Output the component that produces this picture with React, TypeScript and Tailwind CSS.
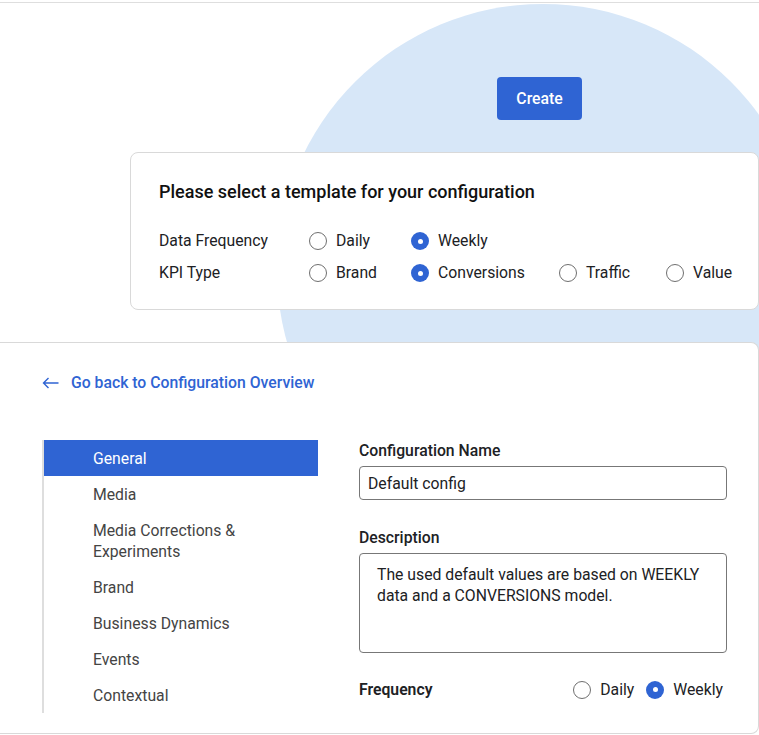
import { useState } from "react";

const blue = "bg-[#2f64d3]";

function Radio({ checked, label, onClick }: { checked: boolean; label: string; onClick?: () => void }) {
  return (
    <button type="button" onClick={onClick} className="flex items-center gap-[9px] text-left">
      {checked ? (
        <span className={`flex h-[18px] w-[18px] items-center justify-center rounded-full ${blue}`}>
          <span className="h-[5px] w-[5px] rounded-full bg-white" />
        </span>
      ) : (
        <span className="h-[18px] w-[18px] rounded-full border-[1.5px] border-[#6f6f6f] bg-white" />
      )}
      <span className="text-[15.75px] leading-[20px] text-[#202124]">{label}</span>
    </button>
  );
}

const sections = [
  "General",
  "Media",
  "Media Corrections & Experiments",
  "Brand",
  "Business Dynamics",
  "Events",
  "Contextual",
];

export default function App() {
  const [freq, setFreq] = useState("WEEKLY");
  const [kpi, setKpi] = useState("CONVERSIONS");
  const [active, setActive] = useState("General");
  const [name, setName] = useState("Default config");

  return (
    <div className="relative h-[735px] w-[759px] overflow-hidden bg-white font-['Roboto',sans-serif] text-[#202124]">
      {/* decorative blob behind the cards */}
      <div className="absolute left-[277px] top-[4px] h-[532px] w-[532px] rounded-full bg-[#d7e7f8]" />

      <div className="relative">
        <div className="mt-[2px] border-t border-[#dedede]" />

        <div className="pl-[497px] pt-[74px]">
          <button className={`h-[43px] w-[85px] rounded-[4px] ${blue} text-[15.75px] font-medium text-white`}>
            Create
          </button>
        </div>

        {/* template picker */}
        <div className="ml-[130px] mt-[32px] h-[158px] w-[629px] rounded-lg border border-[#d9d9d9] bg-white pl-7 pt-[28px]">
          <h2 className="text-[18px] font-medium leading-[22px] text-[#111]">
            Please select a template for your configuration
          </h2>
          <div className="mt-[22px] grid grid-cols-[150px_102px_148px_107px_auto] items-center">
            <div className="flex h-8 items-center text-[15.75px]">Data Frequency</div>
            <Radio checked={freq === "DAILY"} label="Daily" onClick={() => setFreq("DAILY")} />
            <Radio checked={freq === "WEEKLY"} label="Weekly" onClick={() => setFreq("WEEKLY")} />
            <div />
            <div />
            <div className="flex h-8 items-center text-[15.75px]">KPI Type</div>
            <Radio checked={kpi === "BRAND"} label="Brand" onClick={() => setKpi("BRAND")} />
            <Radio checked={kpi === "CONVERSIONS"} label="Conversions" onClick={() => setKpi("CONVERSIONS")} />
            <Radio checked={kpi === "TRAFFIC"} label="Traffic" onClick={() => setKpi("TRAFFIC")} />
            <Radio checked={kpi === "VALUE"} label="Value" onClick={() => setKpi("VALUE")} />
          </div>
        </div>

        {/* config editor */}
        <div className="mt-[32px] h-[392px] w-[759px] rounded-r-lg border border-l-0 border-[#d9d9d9] bg-white pl-[42px]">
          <a href="#" className="mt-[30px] flex items-center gap-[12px] text-[15.75px] font-medium leading-[20px] text-[#2f64d3]">
            <svg width="17" height="12" viewBox="0 0 17 12" fill="none" stroke="#2f64d3" strokeWidth="1.4">
              <path d="M16.5 6H1.5M6.5 1L1.5 6l5 5" />
            </svg>
            Go back to Configuration Overview
          </a>

          <div className="mt-[47px] flex gap-[41px]">
            <nav className="w-[276px] self-start border-l-2 border-[#dedede]">
              {sections.map((s) => (
                <button
                  key={s}
                  type="button"
                  onClick={() => setActive(s)}
                  className={`block w-full py-[7.5px] pl-[49px] pr-6 text-left text-[15.75px] leading-[21px] ${
                    active === s ? `${blue} text-white` : "text-[#444]"
                  }`}
                >
                  {s}
                </button>
              ))}
            </nav>

            <div className="w-[368px] pt-[1px]">
              <label className="block text-[15.75px] font-medium leading-[20px]">Configuration Name</label>
              <input
                value={name}
                onChange={(e) => setName(e.target.value)}
                className="mt-[5px] h-[34px] w-full rounded-[4px] border border-[#777] px-2 text-[15.75px] outline-none"
              />

              <label className="mt-[28px] block text-[15.75px] font-medium leading-[20px]">Description</label>
              <textarea
                readOnly
                value="The used default values are based on WEEKLY data and a CONVERSIONS model."
                className="mt-[5px] h-[100px] w-full resize-none rounded-[4px] border border-[#777] pl-[17px] pr-3 pt-[10px] text-[15.75px] leading-[21px] outline-none"
              />

              <div className="mt-[18px] flex items-center justify-between pr-[4px]">
                <span className="text-[15.75px] font-semibold">Frequency</span>
                <div className="flex gap-[12px]">
                  <Radio checked={freq === "DAILY"} label="Daily" onClick={() => setFreq("DAILY")} />
                  <Radio checked={freq === "WEEKLY"} label="Weekly" onClick={() => setFreq("WEEKLY")} />
                </div>
              </div>
            </div>
          </div>
        </div>
      </div>
    </div>
  );
}
